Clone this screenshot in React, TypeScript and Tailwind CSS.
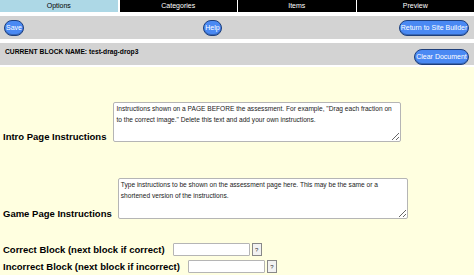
import React from "react";

const font = { fontFamily: '"Liberation Sans", Arial, sans-serif' };

function Btn({ children, className = "" }: { children: React.ReactNode; className?: string }) {
  return (
    <button
      className={
        "h-[16px] rounded-full bg-[#4a89f3] border border-[#1e3f7c] text-white text-[7px] leading-none px-0 whitespace-nowrap flex items-center justify-center shadow-[inset_0_-1px_0_rgba(0,0,0,0.25)] " +
        className
      }
    >
      {children}
    </button>
  );
}

export default function App() {
  return (
    <div className="h-screen flex flex-col bg-white text-black overflow-hidden" style={font}>
      <div className="flex gap-px h-[12px] text-[7px] leading-[12px]">
        <div className="flex-1 bg-[#add8e6] text-center text-black">Options</div>
        <div className="flex-1 bg-black text-center text-white ml-px">Categories</div>
        <div className="flex-1 bg-black text-center text-white">Items</div>
        <div className="flex-1 bg-black text-center text-white">Preview</div>
      </div>

      <div className="mt-[4px] h-[23px] bg-[#d3d3d3] flex items-center px-[4px]">
        <Btn className="w-[20px]">Save</Btn>
        <Btn className="ml-[179px] w-[19px]">Help</Btn>
        <Btn className="ml-auto w-[70px] mr-px">Return to Site Builder</Btn>
      </div>

      <div className="mt-[4px] h-[22px] bg-[#d3d3d3] flex items-center pl-[5px] pr-[4px]">
        <span className="font-bold text-[6.7px] -mt-[3px]">CURRENT BLOCK NAME: test-drag-drop3</span>
        <Btn className="ml-auto w-[55px] mt-[5px] mr-px">Clear Document</Btn>
      </div>

      <div className="mt-[2px] flex-1 bg-[#ffffe0] pl-[3px] pt-[35px]">
        <div className="flex items-end">
          <span className="font-bold text-[9.5px] leading-none pb-px">Intro Page Instructions</span>
          <textarea
            className="ml-[7px] w-[288px] h-[40px] bg-white border border-[#b5b5b5] rounded-[2px] text-[6.6px] leading-[10.5px] text-[#222] px-[2px] pt-[1px] resize-y outline-none"
            defaultValue={'Instructions shown on a PAGE BEFORE the assessment. For example, "Drag each fraction on to the correct image." Delete this text and add your own instructions.'}
          />
        </div>

        <div className="flex items-end mt-[36px]">
          <span className="font-bold text-[9.5px] leading-none pb-px">Game Page Instructions</span>
          <textarea
            className="ml-[6px] w-[290px] h-[41px] bg-white border border-[#b5b5b5] rounded-[2px] text-[6.6px] leading-[10.5px] text-[#222] px-[2px] pt-[1px] resize-y outline-none"
            defaultValue={"Type instructions to be shown on the assessment page here. This may be the same or a shortened version of the instructions."}
          />
        </div>

        <div className="flex items-center mt-[24px] h-[13px]">
          <span className="font-bold text-[9.5px] leading-none">Correct Block (next block if correct)</span>
          <input className="ml-[8px] w-[77px] h-[13px] bg-white border border-[#b5b5b5] rounded-[1px] outline-none" />
          <button className="ml-[2px] w-[10px] h-[13px] bg-[#f2f2f2] border border-[#888] text-[6px] leading-none text-[#333]">?</button>
        </div>

        <div className="flex items-center mt-[4px] h-[13px]">
          <span className="font-bold text-[9.5px] leading-none">Incorrect Block (next block if incorrect)</span>
          <input className="ml-[8px] w-[77px] h-[13px] bg-white border border-[#b5b5b5] rounded-[1px] outline-none" />
          <button className="ml-[2px] w-[10px] h-[13px] bg-[#f2f2f2] border border-[#888] text-[6px] leading-none text-[#333]">?</button>
        </div>
      </div>
    </div>
  );
}
